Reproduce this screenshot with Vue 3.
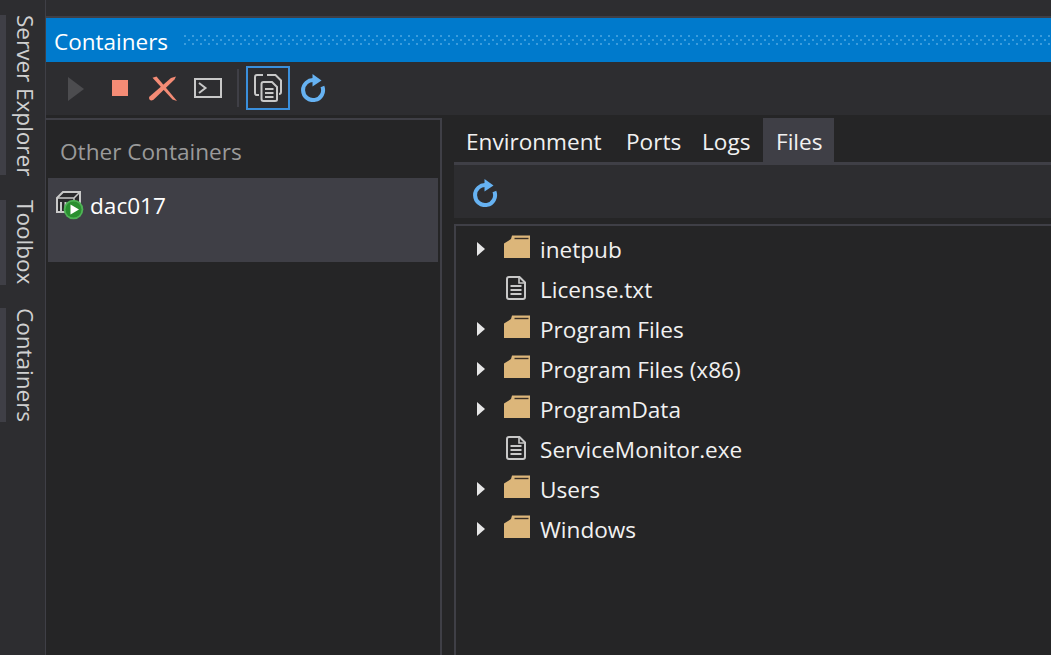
<script setup>
const sideTabs = [
  { label: 'Server Explorer', cls: 'tab-server' },
  { label: 'Toolbox', cls: 'tab-toolbox' },
  { label: 'Containers', cls: 'tab-containers' }
]
const tabs = [
  { name: 'Environment', width: 160 },
  { name: 'Ports', width: 76 },
  { name: 'Logs', width: 73 },
  { name: 'Files', width: 71 }
]
const rows = [
  { name: 'inetpub', folder: true },
  { name: 'License.txt', folder: false },
  { name: 'Program Files', folder: true },
  { name: 'Program Files (x86)', folder: true },
  { name: 'ProgramData', folder: true },
  { name: 'ServiceMonitor.exe', folder: false },
  { name: 'Users', folder: true },
  { name: 'Windows', folder: true }
]
</script>

<template>
  <div class="app">
    <aside class="side">
      <div v-for="t in sideTabs" :key="t.label" class="side-tab" :class="t.cls">
        <span class="side-label">{{ t.label }}</span>
      </div>
    </aside>
    <main class="main">
      <header class="title">
        <span class="title-text">Containers</span>
        <span class="grip"></span>
      </header>
      <div class="toolbar">
        <svg class="play" width="16" height="24" viewBox="0 0 16 24"><path d="M0 0 L16 12 L0 24 Z" fill="#4c4c4f"/></svg>
        <span class="stop"></span>
        <svg class="cross" width="28" height="25" viewBox="0 0 28 25"><path d="M3.5 1.8 L7.5 0.5 L28 25 L23.5 23.5 Z" fill="#f48b75"/><path d="M0.3 20.8 L22 2 L27 0.5 L25.5 3.5 L4.5 23.8 Q2 25 0.7 23.8 Q-0.3 22.3 0.3 20.8 Z" fill="#f48b75"/></svg>
        <svg class="term" width="28" height="20" viewBox="0 0 28 20"><rect x="1" y="1" width="26" height="18" fill="none" stroke="#c8c8c8" stroke-width="2"/><path d="M5 5 L11.5 10 L5 15" fill="none" stroke="#c8c8c8" stroke-width="2"/></svg>
        <span class="sep"></span>
        <span class="toggle">
          <svg width="28" height="28" viewBox="0 0 28 28" fill="none" stroke="#c8c8c8" stroke-width="2"><path d="M5 21 H2.5 Q1 21 1 19 V3 Q1 1 3 1 H9"/><path d="M13 1 H21.5 L27 6.5 V18 Q27 20 25 20"/><path d="M7.5 10 Q7.5 8 9.5 8 H18 L23 13 V25.5 Q23 27 21 27 H9.5 Q7.5 27 7.5 25 Z"/><path d="M11 15 H19.5 M11 19 H19.5 M11 23 H19.5"/></svg>
        </span>
        <svg width="26" height="28" viewBox="0 0 26 28"><path d="M14.5 6.2 A10 10 0 1 0 22.4 12.5" fill="none" stroke="#66b2f2" stroke-width="4"/><path d="M12.5 0 L21.5 6.5 L12.5 12.5 Z" fill="#66b2f2"/></svg>
      </div>
      <div class="content">
        <section class="left">
          <div class="left-head">Other Containers</div>
          <div class="item">
            <span class="box-icon">
              <svg width="28" height="30" viewBox="0 0 28 30"><path d="M1 7 L7 1 H24 V21 H1 Z" fill="#2a2a2c" stroke="#c8c8c8" stroke-width="2"/><path d="M1 7 H18 L24 1 M18 7 V21" fill="none" stroke="#c8c8c8" stroke-width="1.5"/><path d="M5 11 V21 M9.5 11 V21 M14 11 V21" stroke="#c8c8c8" stroke-width="2"/><circle cx="17.5" cy="18.5" r="9.8" fill="#4fb356"/><circle cx="17.5" cy="18.5" r="8" fill="#2a8f30"/><path d="M14.5 13.5 L23 18.5 L14.5 23.5 Z" fill="#fff"/></svg>
            </span>
            <span class="item-name">dac017</span>
          </div>
        </section>
        <section class="right">
          <nav class="tabs">
            <span v-for="t in tabs" :key="t.name" class="tab" :class="{ on: t.name === 'Files' }" :style="{ width: t.width + 'px' }">{{ t.name }}</span>
          </nav>
          <div class="subbar">
            <svg width="26" height="28" viewBox="0 0 26 28"><path d="M14.5 6.2 A10 10 0 1 0 22.4 12.5" fill="none" stroke="#66b2f2" stroke-width="4"/><path d="M12.5 0 L21.5 6.5 L12.5 12.5 Z" fill="#66b2f2"/></svg>
          </div>
          <div class="tree">
            <div v-for="r in rows" :key="r.name" class="row">
              <span class="arrow" :class="{ hidden: !r.folder }"></span>
              <svg v-if="r.folder" class="ficon folder" width="26" height="23" viewBox="0 0 26 23"><path d="M0 8.5 L7 4 L8 0.5 H26 V23 H0 Z" fill="#dcb67a"/><path d="M10.5 3.5 H24.5" stroke="#3a3026" stroke-width="1.4"/></svg>
              <svg v-else class="ficon doc" width="26" height="24" viewBox="0 0 26 24" fill="none" stroke="#c8c8c8" stroke-width="2"><path d="M3 3 Q3 1 5 1 H15.5 L21 6.5 V21 Q21 23 19 23 H5 Q3 23 3 21 Z"/><path d="M15 1 V7 H21" stroke-width="1.6"/><path d="M6.5 10 H17.5 M6.5 14 H17.5 M6.5 18 H17.5"/></svg>
              <span class="rname">{{ r.name }}</span>
            </div>
          </div>
        </section>
      </div>
    </main>
  </div>
</template>

<style>
html, body { margin: 0; background: #2d2d30; }
</style>

<style scoped>
.app {
  width: 1051px; height: 655px; overflow: hidden; display: flex;
  background: #2d2d30; color: #f1f1f1;
  font-family: "Open Sans", "Noto Sans", sans-serif; font-size: 22.6px;
}
.side { width: 46px; flex: none; padding-top: 15px; box-sizing: border-box; display: flex; flex-direction: column; gap: 25px; border-right: 1px solid #3f3f46; }
.side-tab { border-left: 6px solid #3f3f46; display: flex; justify-content: flex-start; padding-left: 7px; box-sizing: border-box; }
.tab-server { height: 160px; }
.tab-toolbox { height: 85px; margin-bottom: -2px; }
.tab-containers { height: 114px; }
.side-label { writing-mode: vertical-rl; font-size: 22.5px; line-height: 24px; color: #d0d0d0; white-space: nowrap; }
.main { flex: 1; min-width: 0; padding-top: 16px; display: flex; flex-direction: column; }
.title { height: 46px; flex: none; box-sizing: border-box; border-top: 2px solid #3f3f46; background: #007acc; display: flex; align-items: center; padding-left: 8px; gap: 16px; color: #fff; }
.title-text { font-size: 22.5px; padding-top: 2px; }
.grip { flex: 1; height: 10px; background-image: radial-gradient(circle at 1px 1px, #3a9cdd 1px, transparent 1px), radial-gradient(circle at 1px 1px, #3a9cdd 1px, transparent 1px); background-size: 8px 8px; background-position: 0 0, 4px 4px; }
.toolbar { height: 56px; flex: none; display: flex; align-items: center; padding: 0 0 1px 22px; box-sizing: border-box; border-bottom: 3px solid #252526; }
.play { margin: 1px 28px 0 0; }
.stop { width: 16px; height: 16px; background: #f48b75; margin-right: 21px; }
.cross { margin: 1px 17px 0 0; }
.term { margin-right: 15px; }
.sep { width: 2px; height: 38px; background: #3f3f46; margin-right: 7px; }
.toggle { width: 44px; height: 44px; box-sizing: border-box; border: 2px solid #3a8fdc; background: #2d2d30; display: flex; align-items: center; justify-content: center; margin-right: 10px; }
.content { flex: 1; display: flex; background: #252526; min-height: 0; }
.left { width: 396px; flex: none; box-sizing: border-box; border-top: 2px solid #3f3f46; border-right: 2px solid #3f3f46; padding: 0 2px; margin-right: 12px; }
.left-head { height: 58px; display: flex; align-items: center; padding: 4px 0 0 12px; box-sizing: border-box; color: #9a9a9a; }
.item { height: 84px; background: #3f3f46; display: flex; align-items: flex-start; padding: 13px 0 0 8px; box-sizing: border-box; }
.box-icon { width: 34px; height: 30px; display: block; }
.item-name { line-height: 30px; color: #fff; }
.right { flex: 1; min-width: 0; display: flex; flex-direction: column; }
.tabs { height: 44px; flex: none; display: flex; align-items: stretch; }
.tab { padding: 2px 0 0 12px; box-sizing: border-box; display: flex; align-items: center; color: #f1f1f1; }
.tab.on { background: #3f3f46; padding-left: 13px; }
.subbar { height: 56px; flex: none; box-sizing: border-box; border-top: 3px solid #3f3f46; background: #2d2d30; padding: 14px 0 0 18px; }
.tree { flex: 1; margin-top: 6px; border-top: 2px solid #3f3f46; border-left: 2px solid #3f3f46; padding-top: 3px; }
.row { height: 40px; display: flex; align-items: center; }
.arrow { width: 0; height: 0; margin: 0 19px 1px 21px; border-left: 8px solid #e6e6e6; border-top: 7.5px solid transparent; border-bottom: 7.5px solid transparent; }
.arrow.hidden { visibility: hidden; }
.ficon { flex: none; margin-right: 10px; }
.folder { margin-bottom: 5px; }
.doc { margin-bottom: 2px; }
.rname { color: #f1f1f1; }
</style>
